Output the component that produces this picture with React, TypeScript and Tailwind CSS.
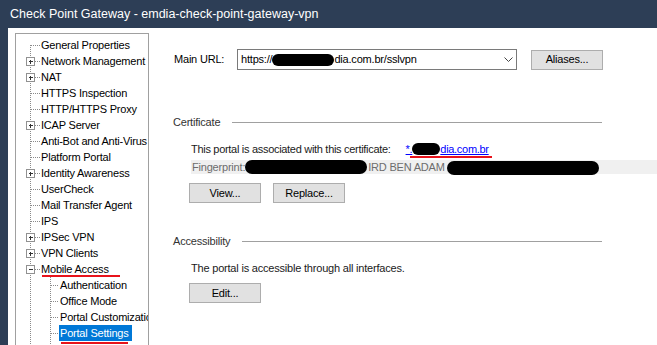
import React from 'react';

type Node = { label: string; level: 0 | 1; exp?: 'plus' | 'minus'; first?: boolean; selected?: boolean; mark?: number };

const TREE: Node[] = [
  { label: 'General Properties', level: 0, first: true },
  { label: 'Network Management', level: 0, exp: 'plus' },
  { label: 'NAT', level: 0, exp: 'plus' },
  { label: 'HTTPS Inspection', level: 0 },
  { label: 'HTTP/HTTPS Proxy', level: 0 },
  { label: 'ICAP Server', level: 0, exp: 'plus' },
  { label: 'Anti-Bot and Anti-Virus', level: 0 },
  { label: 'Platform Portal', level: 0 },
  { label: 'Identity Awareness', level: 0, exp: 'plus' },
  { label: 'UserCheck', level: 0 },
  { label: 'Mail Transfer Agent', level: 0 },
  { label: 'IPS', level: 0 },
  { label: 'IPSec VPN', level: 0, exp: 'plus' },
  { label: 'VPN Clients', level: 0, exp: 'plus' },
  { label: 'Mobile Access', level: 0, exp: 'minus', mark: 78 },
  { label: 'Authentication', level: 1 },
  { label: 'Office Mode', level: 1 },
  { label: 'Portal Customization', level: 1 },
  { label: 'Portal Settings', level: 1, selected: true, mark: 67 },
  { label: 'SSL Clients', level: 1 },
];

const DOT = '#8a8a8a';

function Connector({ node }: { node: Node }) {
  const w = node.level === 0 ? 25 : 44;
  return (
    <svg width={w} height={16} className="shrink-0" shapeRendering="crispEdges">
      <line x1={14.5} y1={node.first ? 8 : 0} x2={14.5} y2={16} stroke={DOT} strokeDasharray="1 1" />
      {node.level === 0 ? (
        <line x1={node.exp ? 19 : 15} y1={8.5} x2={24} y2={8.5} stroke={DOT} strokeDasharray="1 1" />
      ) : (
        <>
          <line x1={34.5} y1={0} x2={34.5} y2={16} stroke={DOT} strokeDasharray="1 1" />
          <line x1={35} y1={8.5} x2={43} y2={8.5} stroke={DOT} strokeDasharray="1 1" />
        </>
      )}
      {node.exp && (
        <>
          <rect x={10.5} y={4.5} width={8} height={8} fill="#fff" stroke="#919191" />
          <line x1={12.5} y1={8.5} x2={17} y2={8.5} stroke="#333" />
          {node.exp === 'plus' && <line x1={14.5} y1={6.5} x2={14.5} y2={11} stroke="#333" />}
        </>
      )}
    </svg>
  );
}

function Btn({ children }: { children: React.ReactNode }) {
  return (
    <div className="w-[72px] h-[20px] bg-[#e1e1e1] border border-[#adadad] flex items-center justify-center text-black">
      {children}
    </div>
  );
}

function Blob({ w, h = 13 }: { w: number; h?: number }) {
  return <span className="inline-block bg-black rounded-full align-middle" style={{ width: w, height: h }} />;
}

export default function App() {
  return (
    <div className="w-[657px] h-[345px] overflow-hidden bg-white flex flex-col font-['Liberation_Sans',Arial,sans-serif] text-[11px] tracking-[-0.2px] text-black">
      <div className="h-[28px] shrink-0 bg-[#2d3e56] text-white text-[12.5px] tracking-normal pl-[10px] pt-[1px] flex items-center">
        Check Point Gateway - emdia-check-point-gateway-vpn
      </div>
      <div className="flex flex-1 min-h-0">
        <div className="w-[8px] shrink-0 bg-[#2d3e56]" />
        {/* tree */}
        <div className="ml-[7px] mt-[5px] w-[134px] shrink-0 border border-b-0 border-[#a0a0a0] pt-[3px] overflow-hidden">
          {TREE.map((n) => (
            <div key={n.label} className="h-[16px] flex items-center whitespace-nowrap">
              <Connector node={n} />
              <span
                className={
                  'relative h-[16px] flex items-center ' +
                  (n.selected ? 'bg-[#0078d7] text-white pl-[1px] pr-[3px] -ml-[1px]' : '')
                }
              >
                {n.label}
                {n.mark && (
                  <span
                    className={'absolute h-[2px] bg-[#e8131b] ' + (n.selected ? 'left-[2px] top-[17px]' : 'left-[1px] top-[14px]')}
                    style={{ width: n.mark }}
                  />
                )}
              </span>
            </div>
          ))}
        </div>

        {/* right panel */}
        <div className="flex-1 flex flex-col pt-[21px] pl-[25px]">
          <div className="flex items-center h-[21px]">
            <span className="w-[63px]">Main URL:</span>
            <div className="w-[280px] h-[21px] border border-[#7a7a7a] flex items-center pl-[3px] pr-[3px]">
              <span>https://</span>
              <Blob w={62} h={12} />
              <span>dia.com.br/sslvpn</span>
              <svg width="9" height="5" viewBox="0 0 9 5" className="ml-auto">
                <path d="M0.5 0.5 L4.5 4.5 L8.5 0.5" fill="none" stroke="#444" strokeWidth="1" />
              </svg>
            </div>
            <div className="ml-[14px]">
              <Btn>Aliases...</Btn>
            </div>
          </div>

          {/* Certificate */}
          <div className="mt-[45px] mr-[55px] flex items-center h-[14px] -ml-[1px]">
            <span className="text-[#333]">Certificate</span>
            <div className="flex-1 h-px bg-[#a0a0a0] ml-[12px]" />
          </div>
          <div className="pl-[17px] flex flex-col">
            <div className="mt-[13px] h-[14px] flex items-center whitespace-nowrap">
              <span className="text-[#1a1a1a] tracking-[-0.3px]">This portal is associated with this certificate:</span>
              <span className="relative ml-[15px] text-[#0000ff] underline flex items-center tracking-[-0.3px]">
                *.
                <Blob w={28} h={12} />
                dia.com.br
                <span className="absolute left-[4px] top-[15px] w-[82px] h-[2px] bg-[#e8131b]" />
              </span>
            </div>
            <div className="mt-[4px] h-[14px] bg-[#f0f0f0] flex items-center whitespace-nowrap text-[#6d6d6d] pl-[1px]">
              <span>Fingerprint:</span>
              <Blob w={122} h={14} />
              <span className="ml-[1px]">IRD BEN ADAM</span>
              <span className="ml-[2px]">
                <Blob w={152} h={14} />
              </span>
            </div>
            <div className="mt-[9px] flex gap-[12px] -ml-[2px]">
              <Btn>View...</Btn>
              <Btn>Replace...</Btn>
            </div>
          </div>

          {/* Accessibility */}
          <div className="mt-[31px] mr-[55px] flex items-center h-[14px] -ml-[1px]">
            <span className="text-[#333]">Accessibility</span>
            <div className="flex-1 h-px bg-[#a0a0a0] ml-[12px]" />
          </div>
          <div className="pl-[17px] flex flex-col">
            <div className="mt-[13px] h-[14px] flex items-center text-[#1a1a1a]">
              The portal is accessible through all interfaces.
            </div>
            <div className="mt-[8px] -ml-[2px]">
              <Btn>Edit...</Btn>
            </div>
          </div>
        </div>
      </div>
    </div>
  );
}
